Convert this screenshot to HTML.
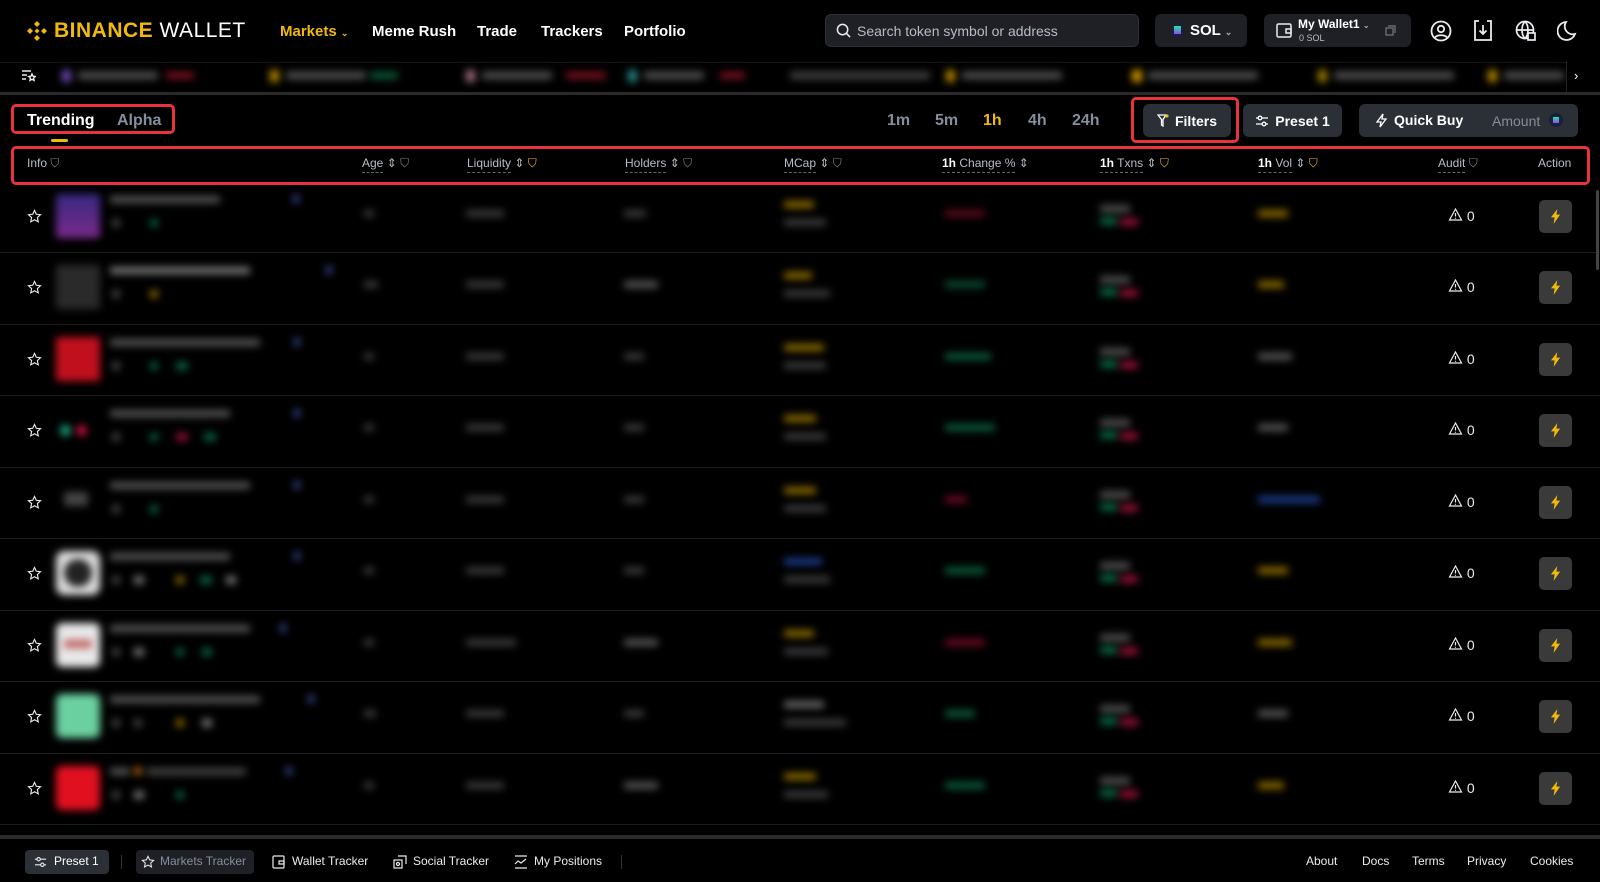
<!DOCTYPE html>
<html><head><meta charset="utf-8">
<style>
*{box-sizing:border-box;margin:0;padding:0}
body{width:1600px;height:882px;background:#000;overflow:hidden;font-family:"Liberation Sans",sans-serif;color:#eaecef;position:relative}
.a{position:absolute}
.nav{font-size:15px;font-weight:bold;top:23px;color:#fff}
.hdr{top:156px;font-size:12px;color:#b7bdc6;white-space:nowrap}
.hdr u{text-decoration:none;border-bottom:1px dashed #666;padding-bottom:2px}
.b{position:absolute;filter:blur(4px);border-radius:2px}
.row{position:absolute;left:0;width:1600px;height:71px}
.btn{position:absolute;background:#2b2f36;border-radius:6px;color:#fff;font-weight:bold;font-size:14px;display:flex;align-items:center;justify-content:center;gap:6px}
.red{position:absolute;border:3px solid #e8333f;border-radius:5px}
.ft{position:absolute;top:854px;font-size:12px;color:#eaecef;white-space:nowrap}
.st{position:absolute;left:27px}
.au{position:absolute;left:1448px;font-size:14px;color:#eaecef}
.lb{position:absolute;left:1539px;width:33px;height:33px;background:#3a3a3a;border-radius:5px;display:flex;align-items:center;justify-content:center}
.ln{position:absolute;height:1px;background:#1c1c1c;left:0;width:1600px}
</style></head><body>

<svg width="0" height="0" style="position:absolute"><defs>
<symbol id="star" viewBox="0 0 16 16"><path d="M8 1.5l1.9 4.1 4.5.5-3.3 3.1.9 4.5L8 11.5l-4 2.2.9-4.5L1.6 6.1l4.5-.5z" fill="none" stroke="#eaecef" stroke-width="1.2"/></symbol>
<symbol id="bolt" viewBox="0 0 12 16"><path d="M8 0L1 9h4l-1 7 7-10H7z" fill="#F0B90B"/></symbol>
<symbol id="warn" viewBox="0 0 14 13"><path d="M7 1L1 12h12z" fill="none" stroke="#eaecef" stroke-width="1.2"/><path d="M7 5v3.5M7 9.8v1" stroke="#eaecef" stroke-width="1.2"/></symbol>
</defs></svg>

<!-- top nav -->
<div class="a" style="left:25px;top:19px;width:24px;height:24px">
<svg width="24" height="24" viewBox="0 0 24 24"><g fill="#F0B90B"><path d="M12 2l3 3-3 3-3-3z"/><path d="M12 16l3 3-3 3-3-3z"/><path d="M2 12l3-3 3 3-3 3z"/><path d="M16 12l3-3 3 3-3 3z"/><path d="M12 9.5l2.5 2.5-2.5 2.5-2.5-2.5z"/></g></svg></div>
<div class="a" style="left:54px;top:19px;font-size:21px;font-weight:bold;color:#F0B90B;letter-spacing:0.5px">BINANCE <span style="color:#fff;font-weight:normal">WALLET</span></div>
<div class="a nav" style="left:280px;color:#F0B90B">Markets <span style="font-size:9px">⌄</span></div>
<div class="a nav" style="left:372px">Meme Rush</div>
<div class="a nav" style="left:477px">Trade</div>
<div class="a nav" style="left:541px">Trackers</div>
<div class="a nav" style="left:624px">Portfolio</div>

<div class="a" style="left:825px;top:14px;width:314px;height:33px;background:#1e2026;border-radius:6px;border:1px solid #2b2f36"></div>
<svg class="a" style="left:836px;top:23px" width="15" height="15" viewBox="0 0 16 16" fill="none" stroke="#eaecef" stroke-width="1.6"><circle cx="7" cy="7" r="5.5"/><path d="M11 11l4 4"/></svg>
<div class="a" style="left:857px;top:23px;font-size:14px;color:#b7bdc6">Search token symbol or address</div>

<div class="a" style="left:1155px;top:14px;width:92px;height:33px;background:#1e2026;border-radius:6px"></div>
<div class="a" style="left:1172px;top:23px;width:11px;height:14px;background:#1a1f3a;border-radius:2px"><div style="margin:3px 2px;height:8px;background:linear-gradient(#14f195,#9945ff)"></div></div>
<div class="a" style="left:1190px;top:22px;font-size:15px;font-weight:bold;color:#fff">SOL <span style="font-size:9px;color:#aaa">⌄</span></div>

<div class="a" style="left:1264px;top:14px;width:147px;height:33px;background:#1e2026;border-radius:6px"></div>
<svg class="a" style="left:1276px;top:23px" width="16" height="15" viewBox="0 0 16 15" fill="none" stroke="#eaecef" stroke-width="1.5"><rect x="1" y="1" width="14" height="13" rx="1.5"/><path d="M10 6h5v4h-5z"/></svg>
<div class="a" style="left:1298px;top:17px;font-size:12px;font-weight:bold;color:#fff">My Wallet1 <span style="font-size:8px;color:#aaa">⌄</span></div>
<div class="a" style="left:1299px;top:33px;font-size:9px;color:#b7bdc6">0 SOL</div>
<svg class="a" style="left:1385px;top:25px" width="11" height="11" viewBox="0 0 11 11" fill="none" stroke="#777" stroke-width="1.2"><rect x="1" y="3" width="7" height="7"/><path d="M3 1h7v7"/></svg>

<svg class="a" style="left:1430px;top:20px" width="22" height="22" viewBox="0 0 22 22" fill="none" stroke="#eaecef" stroke-width="1.8"><circle cx="11" cy="11" r="9.5"/><circle cx="11" cy="9" r="3.2"/><path d="M5 17.5c2-3 10-3 12 0"/></svg>
<svg class="a" style="left:1473px;top:19px" width="20" height="23" viewBox="0 0 20 23" fill="none" stroke="#eaecef" stroke-width="1.8"><path d="M6 2H2v19h16V2h-4"/><path d="M10 6v9M6.5 11.5l3.5 3.5 3.5-3.5"/></svg>
<svg class="a" style="left:1515px;top:20px" width="22" height="22" viewBox="0 0 22 22" fill="none" stroke="#eaecef" stroke-width="1.7"><circle cx="10" cy="10" r="8.5"/><path d="M1.5 10h17M10 1.5c-4 4-4 13 0 17M10 1.5c4 4 4 13 0 17"/><rect x="13" y="13" width="7" height="7" fill="#000"/></svg>
<svg class="a" style="left:1557px;top:20px" width="20" height="22" viewBox="0 0 20 22" fill="none" stroke="#eaecef" stroke-width="1.8"><path d="M9 2a9 9 0 1 0 9 12A8 8 0 0 1 9 2z"/></svg>

<!-- ticker bar -->
<div class="a" style="left:0;top:62px;width:1600px;height:1px;background:#151515"></div>
<svg class="a" style="left:21px;top:69px" width="15" height="13" viewBox="0 0 15 13" fill="none" stroke="#eaecef" stroke-width="1.4"><path d="M1 2h9M1 6h5M1 10h4"/><path d="M11 5l1 2.2 2.3.3-1.7 1.6.4 2.3-2-1.1-2 1.1.4-2.3-1.7-1.6 2.3-.3z"/></svg>
<div class="b" style="left:62px;top:70px;width:9px;height:12px;background:#6d4bb5"></div><div class="b" style="left:78px;top:72px;width:80px;height:7px;background:#555"></div><div class="b" style="left:166px;top:72px;width:28px;height:7px;background:#7a1020"></div>
<div class="b" style="left:270px;top:70px;width:9px;height:12px;background:#b88a00"></div><div class="b" style="left:286px;top:72px;width:80px;height:7px;background:#555"></div><div class="b" style="left:370px;top:72px;width:28px;height:7px;background:#0c5a36"></div>
<div class="b" style="left:466px;top:70px;width:9px;height:12px;background:#a07080"></div><div class="b" style="left:482px;top:72px;width:70px;height:7px;background:#555"></div><div class="b" style="left:566px;top:72px;width:40px;height:7px;background:#7a1020"></div>
<div class="b" style="left:628px;top:70px;width:9px;height:12px;background:#2a8a8a"></div><div class="b" style="left:644px;top:72px;width:60px;height:7px;background:#555"></div><div class="b" style="left:720px;top:72px;width:25px;height:7px;background:#7a1020"></div>
<div class="b" style="left:790px;top:72px;width:140px;height:7px;background:#444"></div>
<div class="b" style="left:946px;top:70px;width:9px;height:12px;background:#b88a00"></div><div class="b" style="left:962px;top:72px;width:100px;height:7px;background:#555"></div>
<div class="b" style="left:1132px;top:70px;width:10px;height:12px;background:#d49a00"></div><div class="b" style="left:1148px;top:72px;width:110px;height:7px;background:#555"></div>
<div class="b" style="left:1318px;top:70px;width:9px;height:12px;background:#a08000"></div><div class="b" style="left:1334px;top:72px;width:120px;height:7px;background:#555"></div>
<div class="b" style="left:1488px;top:70px;width:9px;height:12px;background:#b88a00"></div><div class="b" style="left:1504px;top:72px;width:60px;height:7px;background:#555"></div>
<div class="a" style="left:1566px;top:61px;width:34px;height:31px;background:#000;border-left:1px solid #222"></div>
<div class="a" style="left:1574px;top:68px;font-size:13px;color:#fff">›</div>
<div class="a" style="left:0;top:92px;width:1600px;height:3px;background:#2a2a2a"></div>

<!-- tabs -->
<div class="a" style="left:27px;top:112px;font-size:16px;font-weight:bold;color:#fff">Trending</div>
<div class="a" style="left:117px;top:112px;font-size:16px;font-weight:bold;color:#848e9c">Alpha</div>
<div class="a" style="left:51px;top:139px;width:17px;height:3px;background:#F0B90B;border-radius:2px"></div>
<div class="red" style="left:11px;top:104px;width:164px;height:30px"></div>

<div class="a" style="left:887px;top:112px;font-size:16px;font-weight:bold;color:#848e9c">1m</div>
<div class="a" style="left:935px;top:112px;font-size:16px;font-weight:bold;color:#848e9c">5m</div>
<div class="a" style="left:983px;top:112px;font-size:16px;font-weight:bold;color:#F0B90B">1h</div>
<div class="a" style="left:1028px;top:112px;font-size:16px;font-weight:bold;color:#848e9c">4h</div>
<div class="a" style="left:1072px;top:112px;font-size:16px;font-weight:bold;color:#848e9c">24h</div>

<div class="btn" style="left:1143px;top:104px;width:88px;height:33px"><svg width="12" height="13" viewBox="0 0 12 13" fill="none" stroke="#fff" stroke-width="1.3"><path d="M1 1h8L6 5.5V12L4.5 11V5.5z"/><circle cx="10" cy="2" r="1.6" fill="#F0B90B" stroke="none"/></svg>Filters</div>
<div class="red" style="left:1131px;top:97px;width:108px;height:46px"></div>
<div class="btn" style="left:1243px;top:104px;width:99px;height:33px"><svg width="14" height="12" viewBox="0 0 14 12" fill="none" stroke="#fff" stroke-width="1.3"><path d="M1 3h12M1 9h12"/><circle cx="5" cy="3" r="1.8" fill="#2b2f36"/><circle cx="9" cy="9" r="1.8" fill="#2b2f36"/></svg>Preset 1</div>
<div class="a" style="left:1359px;top:104px;width:219px;height:33px;background:#2b2f36;border-radius:6px"></div>
<svg class="a" style="left:1376px;top:113px" width="11" height="15" viewBox="0 0 11 15" fill="none" stroke="#fff" stroke-width="1.3"><path d="M7 1L1 9h4l-1 5 6-8H6z"/></svg>
<div class="a" style="left:1394px;top:112px;font-size:14px;font-weight:bold;color:#fff">Quick Buy</div>
<div class="a" style="left:1492px;top:113px;font-size:14px;color:#848e9c">Amount</div>
<div class="a" style="left:1549px;top:113px;width:14px;height:14px;border-radius:50%;background:#1a1f3a"><div style="margin:4px 4px;height:6px;background:linear-gradient(#14f195,#9945ff)"></div></div>

<!-- header -->
<div class="a hdr" style="left:27px">Info <span style="color:#888">⛉</span></div>
<div class="a hdr" style="left:362px"><u>Age</u> ⇕ <span style="color:#888">⛉</span></div>
<div class="a hdr" style="left:467px"><u>Liquidity</u> ⇕ <span style="color:#F0B90B">⛉</span></div>
<div class="a hdr" style="left:625px"><u>Holders</u> ⇕ <span style="color:#888">⛉</span></div>
<div class="a hdr" style="left:784px"><u>MCap</u> ⇕ <span style="color:#888">⛉</span></div>
<div class="a hdr" style="left:942px"><u><b style="color:#fff">1h</b> Change %</u> ⇕</div>
<div class="a hdr" style="left:1100px"><u><b style="color:#fff">1h</b> Txns</u> ⇕ <span style="color:#F0B90B">⛉</span></div>
<div class="a hdr" style="left:1258px"><u><b style="color:#fff">1h</b> Vol</u> ⇕ <span style="color:#F0B90B">⛉</span></div>
<div class="a hdr" style="left:1438px"><u>Audit</u> <span style="color:#888">⛉</span></div>
<div class="a hdr" style="left:1538px">Action</div>
<div class="red" style="left:11px;top:146px;width:1579px;height:39px"></div>

<!-- rows -->
<div class="row" style="top:181px">
 <div class="b" style="left:56px;top:13px;width:44px;height:44px;background:linear-gradient(#352a80,#7a2a8a)"></div>
 <div class="b" style="left:110px;top:15px;width:110px;height:7px;background:#555"></div><div class="b" style="left:293px;top:14px;width:6px;height:8px;background:#3a4a99"></div>
 <div class="b" style="left:112px;top:38px;width:8px;height:8px;background:#444"></div><div class="b" style="left:150px;top:38px;width:8px;height:8px;background:#0a6040"></div>
 <div class="b" style="left:364px;top:29px;width:10px;height:7px;background:#3a3a3a"></div><div class="b" style="left:466px;top:29px;width:38px;height:7px;background:#3a3a3a"></div><div class="b" style="left:624px;top:29px;width:22px;height:7px;background:#3a3a3a"></div>
 <div class="b" style="left:784px;top:20px;width:30px;height:7px;background:#8a6a00"></div><div class="b" style="left:784px;top:38px;width:42px;height:7px;background:#3a3a3a"></div>
 <div class="b" style="left:945px;top:29px;width:40px;height:7px;background:#5a0a1a"></div>
 <div class="b" style="left:1100px;top:24px;width:30px;height:8px;background:#4a4a4a"></div><div class="b" style="left:1100px;top:36px;width:18px;height:8px;background:#0a6040"></div><div class="b" style="left:1120px;top:37px;width:18px;height:8px;background:#8a1030"></div>
 <div class="b" style="left:1258px;top:29px;width:30px;height:7px;background:#8a6a00"></div>
</div>
<div class="row" style="top:252px">
 <div class="b" style="left:56px;top:13px;width:44px;height:44px;background:#2a2a2a"></div>
 <div class="b" style="left:110px;top:15px;width:140px;height:7px;background:#777"></div><div class="b" style="left:326px;top:14px;width:6px;height:8px;background:#3a4a99"></div>
 <div class="b" style="left:112px;top:38px;width:8px;height:8px;background:#444"></div><div class="b" style="left:150px;top:38px;width:8px;height:8px;background:#8a6a00"></div>
 <div class="b" style="left:364px;top:29px;width:14px;height:7px;background:#3a3a3a"></div><div class="b" style="left:466px;top:29px;width:38px;height:7px;background:#3a3a3a"></div><div class="b" style="left:624px;top:29px;width:34px;height:7px;background:#555"></div>
 <div class="b" style="left:784px;top:20px;width:28px;height:7px;background:#8a6a00"></div><div class="b" style="left:784px;top:38px;width:46px;height:7px;background:#3a3a3a"></div>
 <div class="b" style="left:945px;top:29px;width:40px;height:7px;background:#0a4a30"></div>
 <div class="b" style="left:1100px;top:24px;width:30px;height:8px;background:#4a4a4a"></div><div class="b" style="left:1100px;top:36px;width:18px;height:8px;background:#0a6040"></div><div class="b" style="left:1120px;top:37px;width:18px;height:8px;background:#8a1030"></div>
 <div class="b" style="left:1258px;top:29px;width:26px;height:7px;background:#8a6a00"></div>
</div>
<div class="row" style="top:324px">
 <div class="b" style="left:56px;top:13px;width:44px;height:44px;background:#c0101e"></div>
 <div class="b" style="left:110px;top:15px;width:150px;height:7px;background:#555"></div><div class="b" style="left:294px;top:14px;width:6px;height:8px;background:#3a4a99"></div>
 <div class="b" style="left:112px;top:38px;width:8px;height:8px;background:#444"></div><div class="b" style="left:150px;top:38px;width:8px;height:8px;background:#0a6040"></div><div class="b" style="left:176px;top:38px;width:12px;height:8px;background:#0a6040"></div>
 <div class="b" style="left:364px;top:29px;width:10px;height:7px;background:#3a3a3a"></div><div class="b" style="left:466px;top:29px;width:38px;height:7px;background:#3a3a3a"></div><div class="b" style="left:624px;top:29px;width:20px;height:7px;background:#3a3a3a"></div>
 <div class="b" style="left:784px;top:20px;width:40px;height:7px;background:#8a6a00"></div><div class="b" style="left:784px;top:38px;width:42px;height:7px;background:#3a3a3a"></div>
 <div class="b" style="left:945px;top:29px;width:46px;height:7px;background:#0a5a38"></div>
 <div class="b" style="left:1100px;top:24px;width:30px;height:8px;background:#4a4a4a"></div><div class="b" style="left:1100px;top:36px;width:18px;height:8px;background:#0a6040"></div><div class="b" style="left:1120px;top:37px;width:18px;height:8px;background:#8a1030"></div>
 <div class="b" style="left:1258px;top:29px;width:34px;height:7px;background:#555"></div>
</div>
<div class="row" style="top:395px">
 <div class="b" style="left:60px;top:30px;width:11px;height:11px;border-radius:50%;background:#1aa080"></div><div class="b" style="left:76px;top:30px;width:11px;height:11px;border-radius:50%;background:#c01040"></div>
 <div class="b" style="left:110px;top:15px;width:120px;height:7px;background:#555"></div><div class="b" style="left:294px;top:14px;width:6px;height:8px;background:#3a4a99"></div>
 <div class="b" style="left:112px;top:38px;width:8px;height:8px;background:#444"></div><div class="b" style="left:150px;top:38px;width:8px;height:8px;background:#0a6040"></div><div class="b" style="left:176px;top:38px;width:12px;height:8px;background:#8a1030"></div><div class="b" style="left:204px;top:38px;width:12px;height:8px;background:#0a6040"></div>
 <div class="b" style="left:364px;top:29px;width:10px;height:7px;background:#3a3a3a"></div><div class="b" style="left:466px;top:29px;width:38px;height:7px;background:#3a3a3a"></div><div class="b" style="left:624px;top:29px;width:20px;height:7px;background:#3a3a3a"></div>
 <div class="b" style="left:784px;top:20px;width:32px;height:7px;background:#8a6a00"></div><div class="b" style="left:784px;top:38px;width:42px;height:7px;background:#3a3a3a"></div>
 <div class="b" style="left:945px;top:29px;width:50px;height:7px;background:#0a5a38"></div>
 <div class="b" style="left:1100px;top:24px;width:30px;height:8px;background:#4a4a4a"></div><div class="b" style="left:1100px;top:36px;width:18px;height:8px;background:#0a6040"></div><div class="b" style="left:1120px;top:37px;width:18px;height:8px;background:#8a1030"></div>
 <div class="b" style="left:1258px;top:29px;width:30px;height:7px;background:#555"></div>
</div>
<div class="row" style="top:467px">
 <div class="b" style="left:64px;top:25px;width:24px;height:14px;background:#444"></div>
 <div class="b" style="left:110px;top:15px;width:140px;height:7px;background:#555"></div><div class="b" style="left:294px;top:14px;width:6px;height:8px;background:#3a4a99"></div>
 <div class="b" style="left:112px;top:38px;width:8px;height:8px;background:#444"></div><div class="b" style="left:150px;top:38px;width:8px;height:8px;background:#0a6040"></div>
 <div class="b" style="left:364px;top:29px;width:10px;height:7px;background:#3a3a3a"></div><div class="b" style="left:466px;top:29px;width:38px;height:7px;background:#3a3a3a"></div><div class="b" style="left:624px;top:29px;width:20px;height:7px;background:#3a3a3a"></div>
 <div class="b" style="left:784px;top:20px;width:32px;height:7px;background:#8a6a00"></div><div class="b" style="left:784px;top:38px;width:42px;height:7px;background:#3a3a3a"></div>
 <div class="b" style="left:945px;top:29px;width:22px;height:7px;background:#6a0a20"></div>
 <div class="b" style="left:1100px;top:24px;width:30px;height:8px;background:#4a4a4a"></div><div class="b" style="left:1100px;top:36px;width:18px;height:8px;background:#0a6040"></div><div class="b" style="left:1120px;top:37px;width:18px;height:8px;background:#8a1030"></div>
 <div class="b" style="left:1258px;top:29px;width:62px;height:7px;background:#1a3a8a"></div>
</div>
<div class="row" style="top:538px">
 <div class="b" style="left:56px;top:13px;width:44px;height:44px;border-radius:8px;background:#ddd"></div><div class="b" style="left:64px;top:21px;width:28px;height:28px;border-radius:50%;background:#222"></div>
 <div class="b" style="left:110px;top:15px;width:120px;height:7px;background:#555"></div><div class="b" style="left:294px;top:14px;width:6px;height:8px;background:#3a4a99"></div>
 <div class="b" style="left:112px;top:38px;width:8px;height:8px;background:#444"></div><div class="b" style="left:134px;top:38px;width:10px;height:8px;background:#777"></div><div class="b" style="left:176px;top:38px;width:8px;height:8px;background:#8a6a00"></div><div class="b" style="left:200px;top:38px;width:12px;height:8px;background:#0a6040"></div><div class="b" style="left:226px;top:38px;width:10px;height:8px;background:#777"></div>
 <div class="b" style="left:364px;top:29px;width:10px;height:7px;background:#3a3a3a"></div><div class="b" style="left:466px;top:29px;width:38px;height:7px;background:#3a3a3a"></div><div class="b" style="left:624px;top:29px;width:20px;height:7px;background:#3a3a3a"></div>
 <div class="b" style="left:784px;top:20px;width:38px;height:7px;background:#1a3a8a"></div><div class="b" style="left:784px;top:38px;width:46px;height:7px;background:#3a3a3a"></div>
 <div class="b" style="left:945px;top:29px;width:40px;height:7px;background:#0a5a38"></div>
 <div class="b" style="left:1100px;top:24px;width:30px;height:8px;background:#4a4a4a"></div><div class="b" style="left:1100px;top:36px;width:18px;height:8px;background:#0a6040"></div><div class="b" style="left:1120px;top:37px;width:18px;height:8px;background:#8a1030"></div>
 <div class="b" style="left:1258px;top:29px;width:30px;height:7px;background:#8a6a00"></div>
</div>
<div class="row" style="top:610px">
 <div class="b" style="left:56px;top:13px;width:44px;height:44px;border-radius:6px;background:#e8e8e8"></div><div class="b" style="left:64px;top:30px;width:28px;height:8px;background:#c06060"></div>
 <div class="b" style="left:110px;top:15px;width:140px;height:7px;background:#555"></div><div class="b" style="left:280px;top:14px;width:6px;height:8px;background:#3a4a99"></div>
 <div class="b" style="left:112px;top:38px;width:8px;height:8px;background:#444"></div><div class="b" style="left:134px;top:38px;width:10px;height:8px;background:#777"></div><div class="b" style="left:176px;top:38px;width:8px;height:8px;background:#0a6040"></div><div class="b" style="left:202px;top:38px;width:10px;height:8px;background:#0a6040"></div>
 <div class="b" style="left:364px;top:29px;width:10px;height:7px;background:#3a3a3a"></div><div class="b" style="left:466px;top:29px;width:50px;height:7px;background:#3a3a3a"></div><div class="b" style="left:624px;top:29px;width:34px;height:7px;background:#555"></div>
 <div class="b" style="left:784px;top:20px;width:30px;height:7px;background:#8a6a00"></div><div class="b" style="left:784px;top:38px;width:44px;height:7px;background:#3a3a3a"></div>
 <div class="b" style="left:945px;top:29px;width:40px;height:7px;background:#6a0a20"></div>
 <div class="b" style="left:1100px;top:24px;width:30px;height:8px;background:#4a4a4a"></div><div class="b" style="left:1100px;top:36px;width:18px;height:8px;background:#0a6040"></div><div class="b" style="left:1120px;top:37px;width:18px;height:8px;background:#8a1030"></div>
 <div class="b" style="left:1258px;top:29px;width:34px;height:7px;background:#8a6a00"></div>
</div>
<div class="row" style="top:681px">
 <div class="b" style="left:56px;top:13px;width:44px;height:44px;border-radius:6px;background:#6ad0a0"></div>
 <div class="b" style="left:110px;top:15px;width:150px;height:7px;background:#555"></div><div class="b" style="left:308px;top:14px;width:6px;height:8px;background:#3a4a99"></div>
 <div class="b" style="left:112px;top:38px;width:8px;height:8px;background:#444"></div><div class="b" style="left:134px;top:38px;width:8px;height:8px;background:#444"></div><div class="b" style="left:176px;top:38px;width:8px;height:8px;background:#8a6a00"></div><div class="b" style="left:202px;top:38px;width:10px;height:8px;background:#777"></div>
 <div class="b" style="left:364px;top:29px;width:12px;height:7px;background:#3a3a3a"></div><div class="b" style="left:466px;top:29px;width:38px;height:7px;background:#3a3a3a"></div><div class="b" style="left:624px;top:29px;width:20px;height:7px;background:#3a3a3a"></div>
 <div class="b" style="left:784px;top:20px;width:40px;height:7px;background:#666"></div><div class="b" style="left:784px;top:38px;width:62px;height:7px;background:#3a3a3a"></div>
 <div class="b" style="left:945px;top:29px;width:30px;height:7px;background:#0a5a38"></div>
 <div class="b" style="left:1100px;top:24px;width:30px;height:8px;background:#4a4a4a"></div><div class="b" style="left:1100px;top:36px;width:18px;height:8px;background:#0a6040"></div><div class="b" style="left:1120px;top:37px;width:18px;height:8px;background:#8a1030"></div>
 <div class="b" style="left:1258px;top:29px;width:30px;height:7px;background:#555"></div>
</div>
<div class="row" style="top:753px">
 <div class="b" style="left:56px;top:13px;width:44px;height:44px;border-radius:6px;background:#e01020"></div>
 <div class="b" style="left:110px;top:15px;width:20px;height:7px;background:#555"></div><div class="b" style="left:134px;top:14px;width:8px;height:8px;background:#b06010"></div><div class="b" style="left:146px;top:15px;width:100px;height:7px;background:#444"></div><div class="b" style="left:286px;top:14px;width:6px;height:8px;background:#3a4a99"></div>
 <div class="b" style="left:112px;top:38px;width:8px;height:8px;background:#444"></div><div class="b" style="left:134px;top:38px;width:10px;height:8px;background:#777"></div><div class="b" style="left:176px;top:38px;width:8px;height:8px;background:#0a6040"></div>
 <div class="b" style="left:364px;top:29px;width:10px;height:7px;background:#3a3a3a"></div><div class="b" style="left:466px;top:29px;width:38px;height:7px;background:#3a3a3a"></div><div class="b" style="left:624px;top:29px;width:34px;height:7px;background:#555"></div>
 <div class="b" style="left:784px;top:20px;width:32px;height:7px;background:#8a6a00"></div><div class="b" style="left:784px;top:38px;width:44px;height:7px;background:#3a3a3a"></div>
 <div class="b" style="left:945px;top:29px;width:40px;height:7px;background:#0a5a38"></div>
 <div class="b" style="left:1100px;top:24px;width:30px;height:8px;background:#4a4a4a"></div><div class="b" style="left:1100px;top:36px;width:18px;height:8px;background:#0a6040"></div><div class="b" style="left:1120px;top:37px;width:18px;height:8px;background:#8a1030"></div>
 <div class="b" style="left:1258px;top:29px;width:26px;height:7px;background:#8a6a00"></div>
</div>

<div class="ln" style="top:252px"></div><div class="ln" style="top:324px"></div><div class="ln" style="top:395px"></div><div class="ln" style="top:467px"></div><div class="ln" style="top:538px"></div><div class="ln" style="top:610px"></div><div class="ln" style="top:681px"></div><div class="ln" style="top:753px"></div><div class="ln" style="top:824px"></div>

<svg class="st" style="top:209px" width="15" height="15"><use href="#star"/></svg>
<svg class="st" style="top:280px" width="15" height="15"><use href="#star"/></svg>
<svg class="st" style="top:352px" width="15" height="15"><use href="#star"/></svg>
<svg class="st" style="top:423px" width="15" height="15"><use href="#star"/></svg>
<svg class="st" style="top:495px" width="15" height="15"><use href="#star"/></svg>
<svg class="st" style="top:566px" width="15" height="15"><use href="#star"/></svg>
<svg class="st" style="top:638px" width="15" height="15"><use href="#star"/></svg>
<svg class="st" style="top:709px" width="15" height="15"><use href="#star"/></svg>
<svg class="st" style="top:781px" width="15" height="15"><use href="#star"/></svg>

<div class="au" style="top:208px"><svg width="15" height="13"><use href="#warn"/></svg> 0</div>
<div class="au" style="top:279px"><svg width="15" height="13"><use href="#warn"/></svg> 0</div>
<div class="au" style="top:351px"><svg width="15" height="13"><use href="#warn"/></svg> 0</div>
<div class="au" style="top:422px"><svg width="15" height="13"><use href="#warn"/></svg> 0</div>
<div class="au" style="top:494px"><svg width="15" height="13"><use href="#warn"/></svg> 0</div>
<div class="au" style="top:565px"><svg width="15" height="13"><use href="#warn"/></svg> 0</div>
<div class="au" style="top:637px"><svg width="15" height="13"><use href="#warn"/></svg> 0</div>
<div class="au" style="top:708px"><svg width="15" height="13"><use href="#warn"/></svg> 0</div>
<div class="au" style="top:780px"><svg width="15" height="13"><use href="#warn"/></svg> 0</div>

<div class="lb" style="top:200px"><svg width="11" height="15"><use href="#bolt"/></svg></div>
<div class="lb" style="top:271px"><svg width="11" height="15"><use href="#bolt"/></svg></div>
<div class="lb" style="top:343px"><svg width="11" height="15"><use href="#bolt"/></svg></div>
<div class="lb" style="top:414px"><svg width="11" height="15"><use href="#bolt"/></svg></div>
<div class="lb" style="top:486px"><svg width="11" height="15"><use href="#bolt"/></svg></div>
<div class="lb" style="top:557px"><svg width="11" height="15"><use href="#bolt"/></svg></div>
<div class="lb" style="top:629px"><svg width="11" height="15"><use href="#bolt"/></svg></div>
<div class="lb" style="top:700px"><svg width="11" height="15"><use href="#bolt"/></svg></div>
<div class="lb" style="top:772px"><svg width="11" height="15"><use href="#bolt"/></svg></div>

<div class="a" style="left:1596px;top:190px;width:3px;height:80px;background:#444;border-radius:2px"></div>

<!-- footer -->
<div class="a" style="left:0;top:835px;width:1600px;height:4px;background:#2a2a2a"></div>
<div class="a" style="left:25px;top:850px;width:84px;height:24px;background:#2b2f36;border-radius:4px"></div>
<svg class="a" style="left:34px;top:856px" width="13" height="12" viewBox="0 0 14 12" fill="none" stroke="#eaecef" stroke-width="1.2"><path d="M1 3h12M1 9h12"/><circle cx="5" cy="3" r="1.8" fill="#2b2f36"/><circle cx="9" cy="9" r="1.8" fill="#2b2f36"/></svg>
<div class="ft" style="left:54px;color:#fff">Preset 1</div>
<div class="a" style="left:121px;top:855px;width:1px;height:14px;background:#333"></div>
<div class="a" style="left:136px;top:850px;width:118px;height:24px;background:#1e2026;border-radius:4px"></div>
<svg class="a" style="left:141px;top:855px" width="14" height="14"><use href="#star"/></svg>
<div class="ft" style="left:160px;color:#848e9c">Markets Tracker</div>
<svg class="a" style="left:272px;top:855px" width="13" height="14" viewBox="0 0 13 14" fill="none" stroke="#eaecef" stroke-width="1.2"><rect x="1" y="1" width="11" height="12" rx="1"/><path d="M7 6h5v3H7z"/></svg>
<div class="ft" style="left:292px">Wallet Tracker</div>
<svg class="a" style="left:393px;top:855px" width="14" height="14" viewBox="0 0 14 14" fill="none" stroke="#eaecef" stroke-width="1.2"><rect x="1" y="5" width="8" height="8"/><path d="M5 1h8v8"/><circle cx="5" cy="9" r="1.5"/></svg>
<div class="ft" style="left:413px">Social Tracker</div>
<svg class="a" style="left:514px;top:855px" width="14" height="14" viewBox="0 0 14 14" fill="none" stroke="#eaecef" stroke-width="1.2"><path d="M1 1h12M1 13h12M1 9l3-3 3 2 5-4"/></svg>
<div class="ft" style="left:534px">My Positions</div>
<div class="a" style="left:621px;top:855px;width:1px;height:14px;background:#333"></div>
<div class="ft" style="left:1306px">About</div>
<div class="ft" style="left:1362px">Docs</div>
<div class="ft" style="left:1412px">Terms</div>
<div class="ft" style="left:1467px">Privacy</div>
<div class="ft" style="left:1530px">Cookies</div>
</body></html>
